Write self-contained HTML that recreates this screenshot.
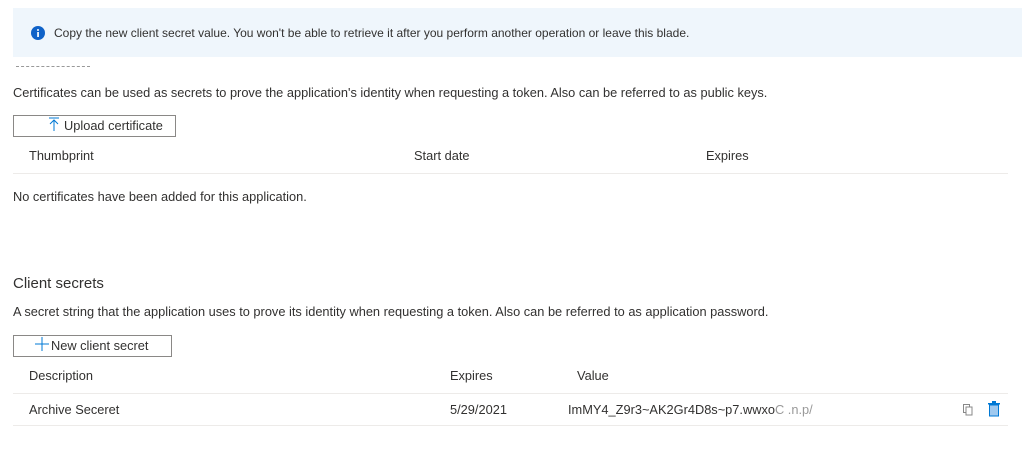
<!DOCTYPE html>
<html><head><style>
body{margin:0;width:1024px;height:455px;background:#fff;font-family:"Liberation Sans",sans-serif;color:#323130;font-size:12.8px;position:relative;overflow:hidden}
.a{position:absolute;white-space:nowrap}
.btn{position:absolute;border:1px solid #8a8886;background:#fff;height:22px;box-sizing:border-box;font-size:12.8px;line-height:20px;color:#323130}
.ln{position:absolute;left:13px;width:995px;height:1px;background:#edebe9}
</style></head><body>
<div class="a" style="left:13px;top:8px;width:1009px;height:49px;background:#eff6fc"></div>
<svg class="a" style="left:31px;top:26px" width="14" height="14"><circle cx="7" cy="7" r="7" fill="#0f62c8"/><rect x="6.2" y="6" width="1.7" height="5" fill="#fff"/><circle cx="7" cy="4" r="1" fill="#fff"/></svg>
<div class="a" style="left:54px;top:26px;font-size:12px">Copy the new client secret value. You won't be able to retrieve it after you perform another operation or leave this blade.</div>
<div class="a" style="left:16px;top:66px;width:74px;height:2px;border-top:1px dashed #999"></div>
<div class="a" style="left:13px;top:85px">Certificates can be used as secrets to prove the application's identity when requesting a token. Also can be referred to as public keys.</div>
<div class="btn" style="left:13px;top:115px;width:163px"><svg style="position:absolute;left:34px;top:1px" width="12" height="15"><path d="M1 1H11M6 3V14M2 7L6 3L10 7" fill="none" stroke="#0078d4" stroke-width="1"/></svg><span style="position:absolute;left:50px;top:0">Upload certificate</span></div>
<div class="a" style="left:29px;top:148px">Thumbprint</div>
<div class="a" style="left:414px;top:148px">Start date</div>
<div class="a" style="left:706px;top:148px">Expires</div>
<div class="ln" style="top:173px"></div>
<div class="a" style="left:13px;top:189px">No certificates have been added for this application.</div>
<div class="a" style="left:13px;top:275px;font-size:15px">Client secrets</div>
<div class="a" style="left:13px;top:304px">A secret string that the application uses to prove its identity when requesting a token. Also can be referred to as application password.</div>
<div class="btn" style="left:13px;top:335px;width:159px"><svg style="position:absolute;left:21px;top:1px" width="14" height="14"><path d="M7 0V14M0 7H14" stroke="#0078d4" stroke-width="1"/></svg><span style="position:absolute;left:37px;top:0">New client secret</span></div>
<div class="a" style="left:29px;top:368px">Description</div>
<div class="a" style="left:450px;top:368px">Expires</div>
<div class="a" style="left:577px;top:368px">Value</div>
<div class="ln" style="top:393px"></div>
<div class="a" style="left:29px;top:402px">Archive Seceret</div>
<div class="a" style="left:450px;top:402px">5/29/2021</div>
<div class="a" style="left:568px;top:402px">ImMY4_Z9r3~AK2Gr4D8s~p7.wwxo<span style="color:#999">C .n.p/</span></div>
<svg class="a" style="left:962px;top:403px" width="12" height="13"><rect x="1.5" y="1.5" width="6" height="8" fill="none" stroke="#888"/><rect x="4" y="4" width="6" height="8" fill="#fff" stroke="#888"/></svg>
<svg class="a" style="left:987px;top:401px" width="14" height="16"><rect x="1" y="2" width="12" height="1.5" fill="#0078d4"/><rect x="5" y="0" width="4" height="2" fill="#0078d4"/><rect x="2.5" y="4" width="9" height="11" fill="#9fc9ef" stroke="#0078d4"/></svg>
<div class="ln" style="top:425px"></div>
</body></html>
